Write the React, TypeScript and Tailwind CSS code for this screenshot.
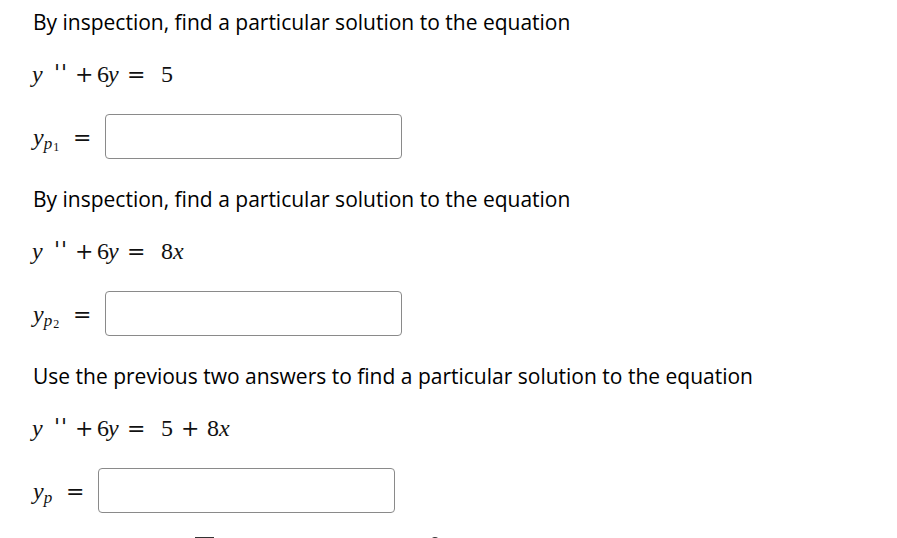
import React from "react";

type Tok = { t: string; w?: number; i?: boolean; op?: boolean; prime?: boolean };

const base: Tok[] = [
  { t: "y", w: 22, i: true },
  { t: "'", w: 7, prime: true },
  { t: "'", w: 14, prime: true },
  { t: "+", w: 22, op: true },
  { t: "6", w: 11 },
  { t: "y", w: 19, i: true },
  { t: "=", w: 34, op: true },
];

function MathLine({ toks }: { toks: Tok[] }) {
  return (
    <div className="ml-[-1px] flex items-baseline h-[24px] leading-[24px] text-[24px] text-[#111] font-['Liberation_Serif',serif]">
      {toks.map((k, idx) => (
        <span
          key={idx}
          className={`inline-block ${k.i ? "italic" : ""} ${
            k.op ? "font-['DejaVu_Serif',serif] text-[22px] font-light" : ""
          } ${k.prime ? "font-['DejaVu_Serif',serif] italic text-[22px] relative top-[-2px]" : ""}`}
          style={k.w ? { width: k.w } : undefined}
        >
          {k.t}
        </span>
      ))}
    </div>
  );
}

function Label({ sub, w }: { sub?: string; w: number }) {
  return (
    <div className="flex items-center text-[#111] font-['Liberation_Serif',serif]">
      <div className="flex items-baseline" style={{ width: w }}>
        <span className="italic text-[24px]">y</span>
        <span className="italic text-[17px] relative top-[4px]">p</span>
        {sub && <span className="text-[12px] relative top-[6px] ml-[1px]">{sub}</span>}
      </div>
      <span className="inline-block w-[32px] font-['DejaVu_Serif',serif] text-[22px] relative top-[1px]">=</span>
    </div>
  );
}

function Block({
  heading,
  rest,
  sub,
  labelW,
}: {
  heading: string;
  rest: Tok[];
  sub?: string;
  labelW: number;
}) {
  return (
    <div className="flex flex-col">
      <p className="h-[24px] leading-[24px] text-[21px] text-black font-['Open_Sans',sans-serif]">
        {heading}
      </p>
      <div className="mt-[28px]">
        <MathLine toks={[...base, ...rest]} />
      </div>
      <div className="mt-[28px] flex items-center h-[45px]">
        <Label sub={sub} w={labelW} />
        <div className="h-[45px] w-[297px] rounded-[4px] border border-[#8a8a8a] bg-white" />
      </div>
    </div>
  );
}

export default function App() {
  return (
    <div className="w-[897px] h-[538px] overflow-hidden bg-white pl-[33px] pt-[10px] flex flex-col">
      <Block
        heading="By inspection, find a particular solution to the equation"
        rest={[{ t: "5" }]}
        sub="1"
        labelW={40}
      />
      <div className="mt-[28px]">
        <Block
          heading="By inspection, find a particular solution to the equation"
          rest={[{ t: "8", w: 12 }, { t: "x", i: true }]}
          sub="2"
          labelW={40}
        />
      </div>
      <div className="mt-[28px]">
        <Block
          heading="Use the previous two answers to find a particular solution to the equation"
          rest={[
            { t: "5", w: 20 },
            { t: "+", w: 26, op: true },
            { t: "8", w: 12 },
            { t: "x", i: true },
          ]}
          labelW={33}
        />
      </div>
      <div className="mt-[24px] flex items-start h-[10px]">
        <div className="ml-[162px] w-[19px] h-[2px] bg-[#333]" />
        <div className="ml-[216px] w-[10px] h-[5px] rounded-t-full border-t-2 border-[#333]" />
      </div>
    </div>
  );
}
